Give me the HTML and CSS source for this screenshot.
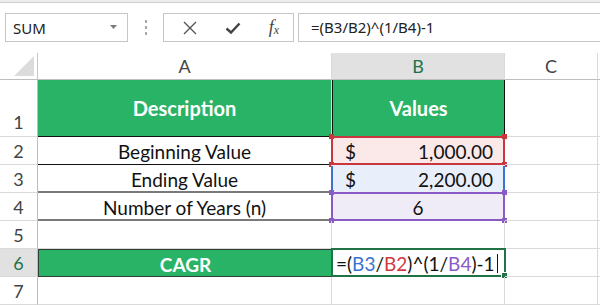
FILE: index.html
```html
<!DOCTYPE html>
<html lang="en">
<head>
    <meta charset="UTF-8">
    <title>CAGR formula</title>
    <link rel="stylesheet" href="styles.css">
</head>
<body>
    <!-- Formula bar -->
    <div class="topbar">
        <div class="namebox">
            <span>SUM</span>
            <svg class="caret" width="8" height="5" viewBox="0 0 8 5"><path d="M0 0H7L3.5 4z" fill="#7a7a7a"/></svg>
        </div>
        <div class="grip"><i></i><i></i><i></i></div>
        <div class="buttons">
            <svg width="14" height="14" viewBox="0 0 14 14"><path d="M1 1L13 13M13 1L1 13" stroke="#555" stroke-width="1.4" fill="none"/></svg>
            <svg width="16" height="14" viewBox="0 0 16 14"><path d="M1.5 7.5L6 11.5L14.5 2.5" stroke="#444" stroke-width="2.4" fill="none"/></svg>
            <span class="fx">f<sub>x</sub></span>
        </div>
        <div class="formula">=(B3/B2)^(1/B4)-1</div>
    </div>

    <!-- Worksheet -->
    <div class="sheet">
        <div class="cell corner"><svg width="20" height="20" viewBox="0 0 20 20"><path d="M20 0V20H0z" fill="#dcdcdc"/></svg></div>
        <div class="cell colhead">A</div>
        <div class="cell colhead sel">B</div>
        <div class="cell colhead">C</div>
        <div class="cell colhead last"></div>

        <div class="cell rowhead low">1</div>
        <div class="cell green title b-black">Description</div>
        <div class="cell green title b-black side-black">Values</div>
        <div class="cell"></div>
        <div class="cell last"></div>

        <div class="cell rowhead">2</div>
        <div class="cell label b-black">Beginning Value</div>
        <div class="cell money fill-red">
            <span>$</span><span>1,000.00</span>
            <div class="ref red"><b class="tl"></b><b class="tr"></b><b class="bl"></b><b class="br"></b></div>
        </div>
        <div class="cell"></div>
        <div class="cell last"></div>

        <div class="cell rowhead">3</div>
        <div class="cell label b-grey">Ending Value</div>
        <div class="cell money fill-blue">
            <span>$</span><span>2,200.00</span>
            <div class="ref blue"></div>
        </div>
        <div class="cell"></div>
        <div class="cell last"></div>

        <div class="cell rowhead">4</div>
        <div class="cell label b-grey">Number of Years (n)</div>
        <div class="cell label fill-purple">
            6
            <div class="ref purple"><b class="tl"></b><b class="tr"></b><b class="bl"></b><b class="br"></b></div>
        </div>
        <div class="cell"></div>
        <div class="cell last"></div>

        <div class="cell rowhead">5</div>
        <div class="cell"></div>
        <div class="cell"></div>
        <div class="cell"></div>
        <div class="cell last"></div>

        <div class="cell rowhead sel">6</div>
        <div class="cell green cagr">CAGR</div>
        <div class="cell edit">
            <span class="entry">=(<span class="c-blue">B3</span>/<span class="c-red">B2</span>)^(1/<span class="c-purple">B4</span>)-1<span class="cursor"></span></span>
            <b class="handle"></b>
        </div>
        <div class="cell"></div>
        <div class="cell last"></div>

        <div class="cell rowhead">7</div>
        <div class="cell"></div>
        <div class="cell"></div>
        <div class="cell"></div>
        <div class="cell last"></div>
    </div>
</body>
</html>
```

FILE: styles.css
```css
body {
    margin: 0;
    width: 600px;
    height: 305px;
    overflow: hidden;
    background-color: #ffffff;
    font-family: Lato, "Noto Sans", sans-serif;
}

/* formula bar */
.topbar {
    height: 53px;
    box-sizing: border-box;
    padding-top: 13px;
    display: flex;
    align-items: flex-start;
    background: linear-gradient(#ececec 0, #ececec 2px, #cfcfcf 2px, #cfcfcf 3px, #ffffff 3px);
    font-family: "Noto Sans", sans-serif;
    font-size: 15px;
    color: #222;
}
.namebox {
    margin-left: 5px;
    width: 123px;
    height: 29px;
    box-sizing: border-box;
    border: 1px solid #c6c6c6;
    display: flex;
    align-items: center;
    justify-content: space-between;
    padding: 0 9px 0 7px;
}
.grip {
    width: 35px;
    display: flex;
    flex-direction: column;
    align-items: center;
    gap: 3px;
    padding-top: 7px;
}
.grip i {
    width: 2px;
    height: 3px;
    background-color: #a8a8a8;
}
.buttons {
    width: 131px;
    height: 29px;
    box-sizing: border-box;
    border: 1px solid #c6c6c6;
    display: flex;
    align-items: center;
    justify-content: space-between;
    padding: 0 14px 0 19px;
}
.fx {
    font-family: "Liberation Serif", serif;
    font-style: italic;
    font-size: 18px;
    color: #444;
}
.fx sub {
    font-size: 12px;
    vertical-align: -1px;
}
.formula {
    margin-left: 4px;
    flex: 1;
    height: 29px;
    box-sizing: border-box;
    border: 1px solid #c6c6c6;
    border-right: none;
    padding-left: 12px;
    line-height: 26px;
}

/* worksheet */
.sheet {
    display: grid;
    grid-template-columns: 38px 294px 173px 93px 2px;
    grid-template-rows: 27px 57px repeat(6, 28px);
    font-size: 19px;
    color: #111;
}
.cell {
    position: relative;
    box-sizing: border-box;
    border-right: 1px solid #dadada;
    border-bottom: 1px solid #dadada;
    display: flex;
    align-items: center;
    justify-content: center;
}
.cell.last {
    border-right: none;
}
.corner {
    border-right-color: #c6c6c6;
    border-bottom-color: #bdbdbd;
    justify-content: flex-end;
    align-items: flex-end;
    padding: 0 3px 3px 0;
}
.colhead {
    color: #444;
    font-size: 18px;
    border-bottom-color: #bdbdbd;
}
.rowhead {
    color: #444;
    font-size: 18px;
    border-right-color: #bdbdbd;
}
.rowhead.low {
    align-items: flex-end;
    padding-bottom: 3px;
}
.sel {
    background-color: #e1e1e1;
    color: #217346;
}

.green {
    background-color: #29b366;
    color: #ffffff;
    font-weight: bold;
}
.title {
    font-size: 20px;
}
.b-black {
    border-bottom: 1px solid #111;
}
.b-grey {
    border-bottom: 2px solid #7a7a7a;
}
.side-black {
    border-left: 1px solid #111;
    border-right: 1px solid #111;
}
.label {
    padding-top: 2px;
}
.money {
    justify-content: space-between;
    padding: 2px 11px 0 13px;
}
.fill-red {
    background-color: #fbe9ea;
}
.fill-blue {
    background-color: #e8eefa;
}
.fill-purple {
    background-color: #f0ecf7;
}

/* coloured reference borders */
.ref {
    position: absolute;
    top: -1px;
    bottom: -1px;
    left: -1px;
    right: -1px;
    border: 2px solid;
}
.ref.red {
    border-color: #c9363e;
}
.ref.blue {
    border-color: #3a74d0;
    border-top: none;
    border-bottom: none;
    top: 1px;
    bottom: 1px;
}
.ref.purple {
    border-color: #8c5ac6;
}
.ref b {
    position: absolute;
    width: 5px;
    height: 5px;
}
.ref.red b {
    background-color: #c9363e;
}
.ref.purple b {
    background-color: #8c5ac6;
}
.ref .tl { top: -4px; left: -4px; }
.ref .tr { top: -4px; right: -4px; }
.ref .bl { bottom: -4px; left: -4px; }
.ref .br { bottom: -4px; right: -4px; }

.cagr {
    border: 1px solid #2f3f35;
    border-right: none;
    padding-top: 2px;
}
.edit {
    border: 2px solid #217346;
    margin: -1px -1px 0 -1px;
    justify-content: flex-start;
    padding: 2px 0 0 3px;
}
.entry {
    display: flex;
    align-items: center;
    white-space: nowrap;
}
.c-blue { color: #3a74d0; }
.c-red { color: #d03a42; }
.c-purple { color: #8c5ac6; }
.cursor {
    display: inline-block;
    width: 1px;
    height: 19px;
    margin-left: 2px;
    background-color: #111;
}
.handle {
    position: absolute;
    right: -4px;
    bottom: -4px;
    width: 5px;
    height: 5px;
    background-color: #217346;
    border: 1px solid #ffffff;
}
```
